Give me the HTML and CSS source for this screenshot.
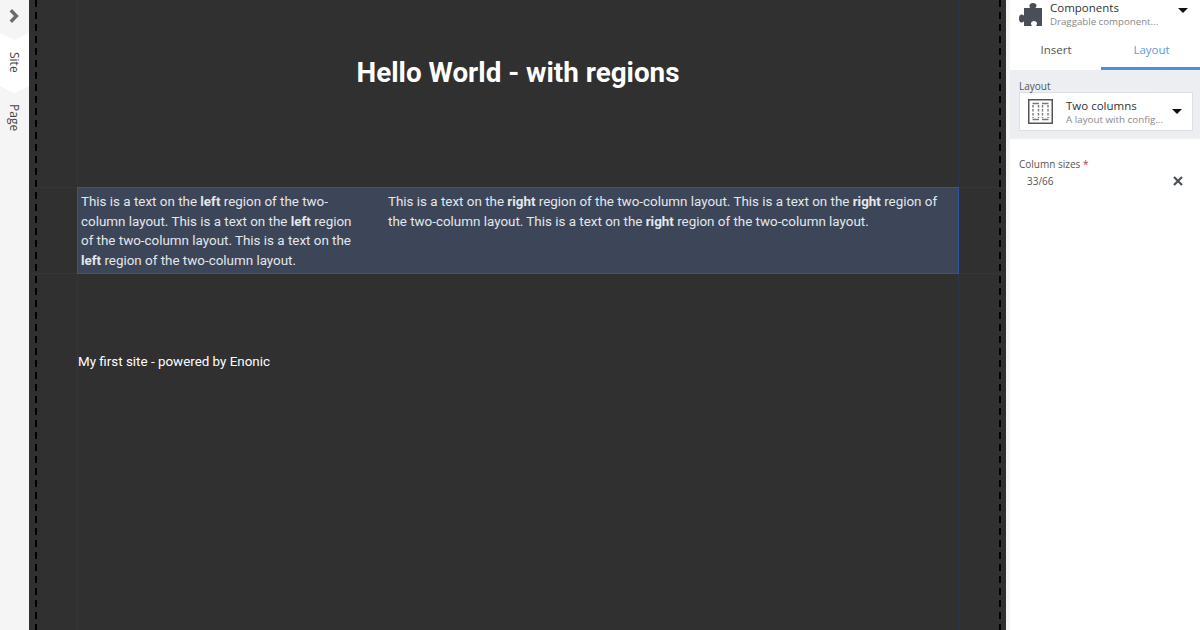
FILE: index.html
```html
<!DOCTYPE html>
<html lang="en">
<head>
<meta charset="utf-8">
<title>Hello World - with regions</title>
<link rel="stylesheet" href="styles.css">
</head>
<body>
<div class="app">
  <nav class="rail">
    <svg class="rail-arrow" width="10" height="14" viewBox="0 0 10 14"><path d="M1.800 1.200 7.400 7l-5.600 5.800" fill="none" stroke="#6b6b6b" stroke-width="3.400"/></svg>
    <div class="rail-tab rail-tab-active"><span>Site</span></div>
    <div class="rail-tab rail-tab-page"><span>Page</span></div>
  </nav>
  <main class="canvas">
    <div class="page">
      <h1 class="title">Hello World - with regions</h1>
      <div class="band">
        <div class="columns">
          <div class="col-left"><p>This is a text on the <b>left</b> region of the two-column layout. This is a text on the <b>left</b> region of the two-column layout. This is a text on the <b>left</b> region of the two-column layout.</p></div>
          <div class="col-right"><p>This is a text on the <b>right</b> region of the two-column layout. This is a text on the <b>right</b> region of the two-column layout. This is a text on the <b>right</b> region of the two-column layout.</p></div>
        </div>
      </div>
      <footer class="foot">My first site - powered by Enonic</footer>
    </div>
  </main>
  <aside class="panel">
    <div class="head">
      <svg class="puzzle" width="23" height="23" viewBox="0 0 23 23"><path fill="#4a4f57" d="M11 5C10.500 4 10.500 3.500 10.500 2.500 10.500 1 12 0 14 0s3.500 1 3.500 2.500c0 1-.5 1.500-1 2.500H23v18h-6c.5-.8 1-1.500 1-2.500 0-1.500-1.500-2.500-3-2.500s-3 1-3 2.500c0 1 .5 1.700 1 2.500H5v-4.500c-.8.500-1.500 1-2.500 1C1 19.500 0 18 0 15.500S1 11.500 2.500 11.500c1 0 1.700.5 2.500 1V5z"/></svg>
      <div class="head-text">
        <div class="head-title">Components</div>
        <div class="head-sub">Draggable component...</div>
      </div>
      <span class="caret"></span>
    </div>
    <div class="tabs">
      <div class="tab">Insert</div>
      <div class="tab tab-active">Layout</div>
    </div>
    <div class="layout-box">
      <div class="layout-label">Layout</div>
      <div class="select">
        <svg class="layout-icon" width="25" height="25" viewBox="0 0 25 25"><path fill="none" stroke="#555" stroke-width="1.500" d="M.75.75h23.500v23.500H.75z"/><path fill="none" stroke="#777" stroke-width="1.400" d="M4.500 4.500H11M4.500 20.500H11M14 4.500h6.500M14 20.500h6.500"/><path fill="none" stroke="#777" stroke-width="1.400" stroke-dasharray="2.500 1.500" d="M5 6v13M10.500 6v13M14.500 6v13M20 6v13"/></svg>
        <div class="select-text">
          <div class="select-title">Two columns</div>
          <div class="select-sub">A layout with config...</div>
        </div>
        <span class="caret"></span>
      </div>
    </div>
    <div class="form">
      <div class="form-label">Column sizes <span class="req">*</span></div>
      <div class="form-row"><span>33/66</span>
        <svg class="clear" width="10" height="10" viewBox="0 0 10 10"><path d="M1 1l8 8M9 1l-8 8" stroke="#4a4f57" stroke-width="2.200" fill="none"/></svg>
      </div>
    </div>
  </aside>
</div>
</body>
</html>
```
FILE: styles.css
```css
* { box-sizing: border-box; }
html, body { margin: 0; height: 630px; overflow: hidden; }
body { font-family: "Open Sans", sans-serif; }
.app { display: flex; width: 1200px; height: 630px; background: #f3f3f3; }

.rail { width: 29px; flex: none; background: #f5f5f5; display: flex; flex-direction: column; }
.rail-arrow { margin: 9px 0 0 9px; flex: none; }
.rail-tab { display: flex; justify-content: center; padding-top: 18px; padding-right: 1px; font-size: 12px; color: #444; }
.rail-tab span { writing-mode: vertical-rl; }
.rail-tab-active { margin-top: 10px; height: 60px; padding-top: 19px; background: #fff; clip-path: polygon(0 0, 50% 7px, 100% 0, 100% 53px, 50% 60px, 0 53px); }
.rail-tab-page { margin-top: -7px; }

.canvas { width: 977px; flex: none; background: #303030; position: relative; padding: 0 47px 0 48px; }
.canvas::before, .canvas::after { content: ""; position: absolute; top: 0; bottom: 0; width: 2px; background: repeating-linear-gradient(#000 0 7px, transparent 7px 12px); }
.canvas::before { left: 6px; }
.canvas::after { right: 5px; }
.page { width: 882px; height: 630px; border-left: 1px solid #2c3648; border-right: 1px solid #2c3648; color: #fff; font-family: "Roboto", sans-serif; }
.title { margin: 0; height: 187px; padding-top: 55px; text-align: center; font-size: 27.800px; line-height: 36px; font-weight: 700; }
.band { height: 87px; margin: 0 -47px 0 -48px; padding: 0 47px 0 48px; border-top: 1px solid #2c3648; border-bottom: 1px solid #2c3648; }
.columns { display: flex; height: 87px; margin: -1px -1px; background: #3c4658; border: 1px solid #2d55a0; font-size: 13.400px; line-height: 19.500px; color: #e4e7ec; }
.col-left { width: 306px; padding: 4px 24px 3px 3px; }
.col-right { flex: 1; padding: 4px 13px 3px 4px; }
.columns p { margin: 0; }
.foot { margin-top: 78px; font-size: 13.400px; line-height: 20px; }

.panel { width: 190px; flex: none; margin-left: 4px; background: #fff; display: flex; flex-direction: column; }
.head { display: flex; height: 29px; padding: 0 12px 0 9px; align-items: flex-start; }
.puzzle { margin-top: 3px; flex: none; }
.head-text { margin-left: 8px; flex: 1; }
.head-title { font-size: 11.500px; line-height: 15px; color: #333; }
.head-sub { font-size: 9.700px; line-height: 14px; color: #888; }
.caret { width: 0; height: 0; border: 5px solid transparent; border-top: 5px solid #111; border-bottom: 0; flex: none; margin-top: 8px; }
.tabs { display: flex; height: 41px; }
.tab { width: 91px; padding-left: 1px; text-align: center; font-size: 11.500px; line-height: 42px; color: #555; }
.tab-active { width: 99px; padding-left: 2px; color: #5a9be0; border-bottom: 3px solid #4a90e2; }
.layout-box { background: #eceef1; height: 69px; padding: 10px 7px 0 9px; }
.layout-label { font-size: 10px; line-height: 12px; color: #555; }
.select { display: flex; align-items: center; height: 39px; background: #fff; border: 1px solid #dcdfe3; padding: 0 10px 0 8px; }
.layout-icon { flex: none; }
.select-text { flex: 1; margin-left: 13px; padding-top: 1px; }
.select-title { font-size: 11.500px; line-height: 15px; color: #333; }
.select-sub { font-size: 9.800px; line-height: 13px; color: #888; }
.select .caret { margin-top: 0; }
.form { padding: 19px 17px 0 9px; }
.form-label { font-size: 10px; line-height: 13px; color: #555; }
.req { color: #b03a3a; }
.form-row { display: flex; justify-content: space-between; align-items: center; padding: 0 0 0 8px; height: 20px; font-size: 10px; color: #555; }
```
